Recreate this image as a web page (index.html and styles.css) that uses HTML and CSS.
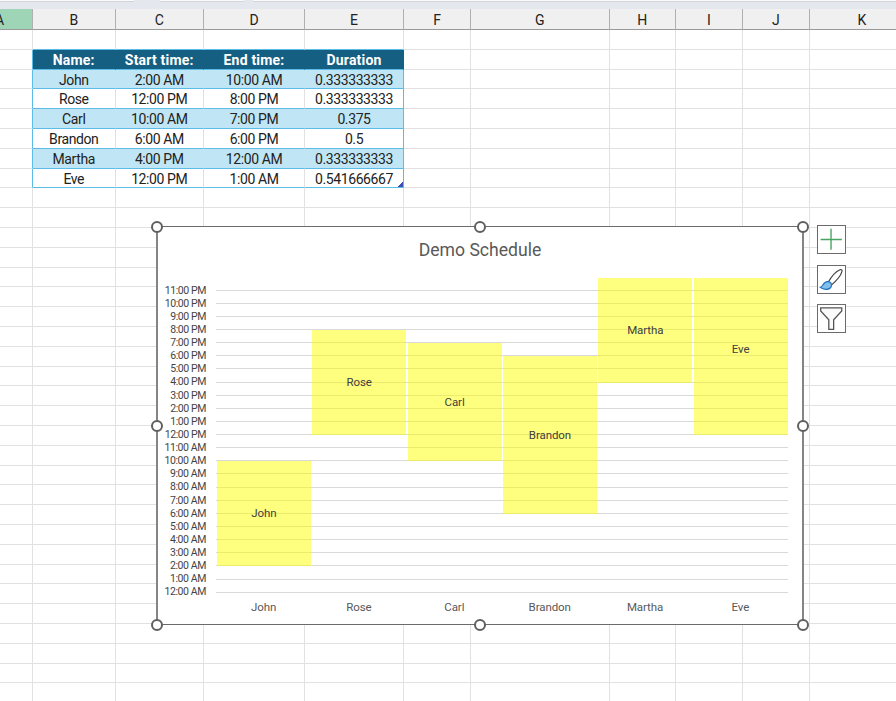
FILE: index.html
```html
<!DOCTYPE html>
<html lang="en">
<head>
    <meta charset="UTF-8">
    <meta name="viewport" content="width=device-width, initial-scale=1.0">
    <title>Demo Schedule</title>
    <link rel="stylesheet" href="styles.css">
</head>
<body>
    <div class="formula-bar">
        <div class="name-box"></div>
        <div class="fx-buttons"></div>
        <div class="fx-input"></div>
    </div>

    <div class="sheet" id="sheet">
        <div class="row col-headers">
            <div class="selected">A</div>
            <div>B</div>
            <div>C</div>
            <div>D</div>
            <div>E</div>
            <div>F</div>
            <div>G</div>
            <div>H</div>
            <div>I</div>
            <div>J</div>
            <div>K</div>
        </div>
    </div>

    <div class="chart">
        <h2>Demo Schedule</h2>
        <div class="chart-body">
            <div class="axis" id="axis"></div>
            <div class="plot" id="plot"></div>
        </div>
        <div class="categories" id="categories"></div>

        <span class="handle top left"></span>
        <span class="handle top center"></span>
        <span class="handle top right"></span>
        <span class="handle middle left"></span>
        <span class="handle middle right"></span>
        <span class="handle bottom left"></span>
        <span class="handle bottom center"></span>
        <span class="handle bottom right"></span>
    </div>

    <div class="chart-tools">
        <button title="Chart Elements">
            <svg viewBox="0 0 29 29"><path d="M14 3v22.5M2.8 14.5h22.8" stroke="#4aa564" stroke-width="1.5"/></svg>
        </button>
        <button title="Chart Styles">
            <svg viewBox="0 0 29 29">
                <path d="M11 17.5C14 12 19 6 23.7 4C25.4 3.4 26.2 4.4 25.7 6C24.5 10 19 16.5 14.3 20.5Z" fill="#fff" stroke="#444" stroke-width="1.3"/>
                <path d="M2.5 23C5.5 22.5 5.2 17 10.3 16.8C13 16.7 15.4 18.8 14.4 21.5C13 26 6 26 2.5 23Z" fill="#83beec" stroke="#1e74bd" stroke-width="1.3"/>
            </svg>
        </button>
        <button title="Chart Filters">
            <svg viewBox="0 0 29 29"><path d="M2.9 3h22.6v3.4L16.8 15.8v10.4h-5.2v-10.4L2.9 6.4z" fill="#fafafa" stroke="#555" stroke-width="1.4"/></svg>
        </button>
    </div>

    <script>
        const table = [
            ['Name:', 'Start time:', 'End time:', 'Duration'],
            ['John', '2:00 AM', '10:00 AM', '0.333333333'],
            ['Rose', '12:00 PM', '8:00 PM', '0.333333333'],
            ['Carl', '10:00 AM', '7:00 PM', '0.375'],
            ['Brandon', '6:00 AM', '6:00 PM', '0.5'],
            ['Martha', '4:00 PM', '12:00 AM', '0.333333333'],
            ['Eve', '12:00 PM', '1:00 AM', '0.541666667']
        ];

        // start and end hour, 25 is 1:00 AM on the next day
        const shifts = [
            { name: 'John', start: 2, end: 10 },
            { name: 'Rose', start: 12, end: 20 },
            { name: 'Carl', start: 10, end: 19 },
            { name: 'Brandon', start: 6, end: 18 },
            { name: 'Martha', start: 16, end: 24 },
            { name: 'Eve', start: 12, end: 25 }
        ];

        function add(parent, className, text) {
            const el = document.createElement('div');
            el.className = className;
            el.textContent = text || '';
            parent.appendChild(el);
            return el;
        }

        const sheet = document.getElementById('sheet');
        for (let r = 0; r < 34; r++) {
            const row = add(sheet, 'row');
            const data = table[r - 1];
            for (let c = 0; c < 11; c++) {
                const cell = add(row, 'cell');
                if (data && c >= 1 && c <= 4) {
                    cell.textContent = data[c - 1];
                    cell.classList.add('table-cell');
                    if (r === 1) cell.classList.add('table-head');
                    else if (r % 2 === 0) cell.classList.add('band');
                    if (c === 4) cell.classList.add('table-end');
                    if (c === 4 && r === table.length) cell.classList.add('table-corner');
                }
                if (data && c === 0) cell.classList.add('before-table');
                if (r === 0 && c >= 1 && c <= 4) cell.classList.add('above-table');
            }
        }

        const axis = document.getElementById('axis');
        const plot = document.getElementById('plot');
        for (let h = 23; h >= 0; h--) {
            add(axis, 'tick', (h % 12 || 12) + ':00 ' + (h < 12 ? 'AM' : 'PM'));
            add(plot, 'gridline').style.gridRow = 24 - h;
        }

        const categories = document.getElementById('categories');
        shifts.forEach((s, i) => {
            // the bar stops at midnight, its label stays centred on the whole shift
            const bar = add(plot, 'bar', s.name);
            const end = Math.min(s.end, 24);
            bar.style.gridColumn = i + 1;
            bar.style.gridRow = (25 - end) + ' / ' + (25 - s.start);
            bar.style.paddingBottom = (s.end - end) * 13.13 + 1 + 'px';
            add(categories, 'category', s.name);
        });
    </script>
</body>
</html>
```
FILE: styles.css
```css
* {
    box-sizing: border-box;
}
body {
    margin: 0;
    height: 701px;
    position: relative;
    overflow: hidden;
    background-color: #fff;
    color: #222;
    font-family: Roboto, "Liberation Sans", sans-serif;
    font-size: 14px;
}
.formula-bar {
    display: flex;
    height: 9px;
    background-color: #e4e7ed;
}
.formula-bar div {
    height: 1px;
    background-color: #fafafa;
    box-shadow: 0 1px 0 #d3d5d8;
}
.name-box {
    width: 134px;
    margin-right: 26px;
}
.fx-buttons {
    width: 84px;
    margin-right: 9px;
}
.fx-input {
    flex: 1;
}

/* sheet */
.sheet {
    width: 949px;
    margin-left: -33px;
}
.row {
    display: grid;
    grid-template-columns: 66px 82.5px 88.5px 101px 99px 67px 138.5px 66.5px 67px 66.5px 106px;
    grid-template-rows: 100%;
    height: 19.8px;
    line-height: 20px;
    text-align: center;
}
.row > div {
    border-right: 1px solid #e1e1e1;
    border-bottom: 1px solid #e1e1e1;
}
.col-headers {
    height: 21px;
    line-height: 22px;
    background-color: #f0f0f0;
}
.col-headers > div {
    border-right-color: #b0b0b0;
    border-bottom-color: #999;
}
.col-headers > .selected {
    background-color: #9fd5b7;
}
.row > .table-cell {
    border-bottom-color: #5bbce8;
    letter-spacing: -0.4px;
}
.row > .above-table {
    border-bottom-color: #5bbce8;
}
.row > .before-table,
.row > .table-end {
    border-right-color: #5bbce8;
}
.row > .table-head {
    background-color: #156082;
    border-right-color: #156082;
    color: #fff;
    font-weight: bold;
    letter-spacing: 0.2px;
}
.row > .band {
    background-color: #c0e6f5;
}
.row > .band:not(.table-end) {
    border-right-color: #c0e6f5;
}
.table-corner {
    background: linear-gradient(135deg, transparent 50%, #3f51b5 50%) no-repeat right bottom / 5px 5px;
}

/* chart */
.chart {
    position: absolute;
    left: 156px;
    top: 226px;
    width: 648px;
    height: 399px;
    border: 1px solid #6b6b6b;
    border-left: 2px solid #858585;
    border-right: 2px solid #858585;
    background-color: #fff;
    color: #595959;
}
.chart h2 {
    height: 50.5px;
    margin: 0;
    line-height: 46px;
    text-align: center;
    font-size: 17.6px;
    font-weight: normal;
}
.chart-body {
    display: flex;
    height: 315.2px;
}
.axis {
    width: 48px;
    padding-top: 6px;
    font-size: 10.5px;
    letter-spacing: -0.4px;
    text-align: right;
    color: #444;
}
.tick {
    height: 13.13px;
    line-height: 13.13px;
}
.plot {
    display: grid;
    grid-template-columns: repeat(6, 1fr);
    grid-template-rows: repeat(24, 1fr);
    width: 572px;
    margin-left: 10px;
}
.gridline {
    grid-column: 1 / -1;
    border-bottom: 1px solid #d9d9d9;
}
.bar {
    display: flex;
    align-items: center;
    justify-content: center;
    margin: 0 0.5px 0 1px;
    background-color: rgba(255, 255, 0, 0.5);
    color: #404040;
    font-size: 11.5px;
    letter-spacing: -0.1px;
}
.categories {
    display: grid;
    grid-template-columns: repeat(6, 1fr);
    width: 572px;
    margin-left: 58px;
    line-height: 29px;
    text-align: center;
    font-size: 11.5px;
    letter-spacing: -0.1px;
}
.handle {
    position: absolute;
    width: 12px;
    height: 12px;
    border: 2px solid #5f5f5f;
    border-radius: 50%;
    background-color: #fff;
}
.handle.top {
    top: -6.5px;
}
.handle.middle {
    top: 192.5px;
}
.handle.bottom {
    bottom: -6.5px;
}
.handle.left {
    left: -7px;
}
.handle.center {
    left: 316px;
}
.handle.right {
    right: -7px;
}

.chart-tools {
    position: absolute;
    left: 817px;
    top: 225px;
    display: flex;
    flex-direction: column;
    gap: 10.5px;
}
.chart-tools button {
    width: 29px;
    height: 29px;
    padding: 0;
    border: 1px solid #6b6b6b;
    background-color: #fff;
}
.chart-tools svg {
    display: block;
    width: 27px;
    height: 27px;
    fill: none;
}
```
